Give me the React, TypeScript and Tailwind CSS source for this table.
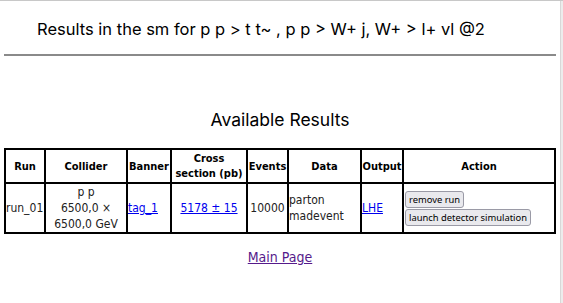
const th = "border-2 border-black px-0 py-0 text-center font-bold text-[11px] leading-[15px] text-black";
const td = "border-2 border-black px-0 py-0 text-[12px] leading-[16px] text-[#222]";
const btn =
  "rounded-[3px] border border-[#9a9aa6] bg-[#e9e9ed] px-[3px] font-['Noto_Sans',sans-serif] text-[9.4px] leading-[15px] text-black";

export default function App() {
  return (
    <div className="flex h-[303px] w-[563px] overflow-hidden border-t border-[#c8c8c8] bg-white">
      <div className="flex flex-1 flex-col">
        <h1 className="mt-[17px] pr-[38px] text-center font-['Inter',sans-serif] text-[16.5px] leading-[22px] text-black">
          Results in the sm for p p &gt; t t~ , p p &gt; W+ j, W+ &gt; l+ vl @2
        </h1>
        <hr className="mx-[4px] mt-[14px] border-t-2 border-[#8a8a8a]" />
        <h2 className="mt-[53px] text-center font-['Inter',sans-serif] text-[17.5px] leading-[22px] text-black">
          Available Results
        </h2>
        <table className="mx-[4px] mt-[17px] w-[552px] table-fixed border-collapse font-['DejaVu_Sans_Condensed','DejaVu_Sans',sans-serif] font-stretch-condensed">
          <colgroup>
            <col className="w-[40px]" />
            <col className="w-[82px]" />
            <col className="w-[44px]" />
            <col className="w-[76px]" />
            <col className="w-[41px]" />
            <col className="w-[73px]" />
            <col className="w-[42px]" />
            <col />
          </colgroup>
          <thead>
            <tr className="h-[34px]">
              <th className={th}>Run</th>
              <th className={th}>Collider</th>
              <th className={th}>Banner</th>
              <th className={th}>
                Cross
                <br />
                section (pb)
              </th>
              <th className={th}>Events</th>
              <th className={th}>Data</th>
              <th className={th}>Output</th>
              <th className={th}>Action</th>
            </tr>
          </thead>
          <tbody>
            <tr className="h-[49px]">
              <td className={td + " text-left"}>run_01</td>
              <td className={td + " text-center"}>
                p p
                <br />
                6500,0 ×
                <br />
                6500,0 GeV
              </td>
              <td className={td + " text-left"}>
                <a href="#" className="text-[#0000ee] underline">tag_1</a>
              </td>
              <td className={td + " text-center"}>
                <a href="#" className="text-[#0000ee] underline">5178 ± 15</a>
              </td>
              <td className={td + " text-center"}>10000</td>
              <td className={td + " text-left"}>
                parton
                <br />
                madevent
              </td>
              <td className={td + " text-left"}>
                <a href="#" className="text-[#0000ee] underline">LHE</a>
              </td>
              <td className={td + " text-left"}>
                <div className="flex flex-col items-start pl-[1px]">
                  <button className={btn}>remove run</button>
                  <button className={btn + " mt-[1px]"}>launch detector simulation</button>
                </div>
              </td>
            </tr>
          </tbody>
        </table>
        <div className="mt-[14px] text-center text-[14px] leading-[17px]">
          <a href="#" className="font-['DejaVu_Sans_Condensed','DejaVu_Sans',sans-serif] text-[14px] text-[#551a8b] underline font-stretch-condensed">
            Main Page
          </a>
        </div>
      </div>
      <div className="w-[6px] border-l border-[#d8d8d8] bg-[#ececec]" />
    </div>
  );
}
